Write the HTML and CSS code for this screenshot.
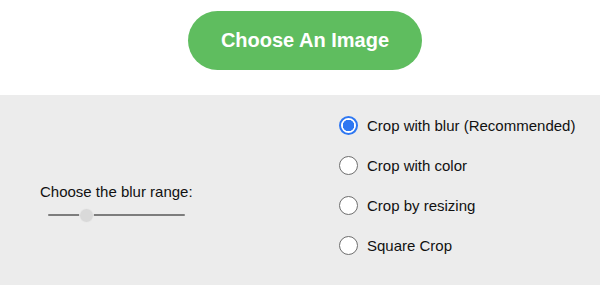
FILE: index.html
```html
<!DOCTYPE html>
<html>
<head>
<meta charset="utf-8">
<link rel="stylesheet" href="styles.css">
</head>
<body>
<header class="top">
  <button class="choose-btn">Choose An Image</button>
</header>
<section class="panel">
  <div class="blur-col">
    <label class="blur-label" for="blur">Choose the blur range:</label>
    <input class="blur-range" id="blur" type="range" min="0" max="100" value="25">
  </div>
  <div class="options">
    <label class="option"><input type="radio" name="mode" checked><span>Crop with blur (Recommended)</span></label>
    <label class="option"><input type="radio" name="mode"><span>Crop with color</span></label>
    <label class="option"><input type="radio" name="mode"><span>Crop by resizing</span></label>
    <label class="option"><input type="radio" name="mode"><span>Square Crop</span></label>
  </div>
</section>
</body>
</html>
```
FILE: styles.css
```css
* { box-sizing: border-box; }
html, body { margin: 0; padding: 0; background: #fff; }
body {
  font-family: "Liberation Sans", Arial, sans-serif;
  color: #111;
  width: 600px;
  height: 288px;
  overflow: hidden;
}
.top {
  height: 95px;
  display: flex;
  justify-content: center;
  padding-top: 11px;
  padding-left: 10px;
}
.choose-btn {
  width: 234px;
  height: 59px;
  border: none;
  border-radius: 30px;
  background: #5fbd5f;
  color: #fff;
  font-family: "Liberation Sans", Arial, sans-serif;
  font-weight: bold;
  font-size: 20px;
  padding: 0;
}
.panel {
  height: 190px;
  background: #ececec;
  display: flex;
}
.blur-col {
  width: 339px;
  padding-left: 40px;
  padding-top: 88px;
  display: flex;
  flex-direction: column;
}
.blur-label {
  font-size: 15px;
  line-height: 18px;
}
.blur-range {
  -webkit-appearance: none;
  appearance: none;
  width: 137px;
  height: 16px;
  margin: 6px 0 0 8px;
  background: transparent;
}
.blur-range::-webkit-slider-runnable-track {
  height: 2px;
  background: #7d7d7d;
  border-radius: 1px;
}
.blur-range::-webkit-slider-thumb {
  -webkit-appearance: none;
  width: 15px;
  height: 15px;
  margin-top: -6.5px;
  border-radius: 50%;
  background: #d9d9d9;
  border: 1.5px solid #ececec;
}
.options {
  display: flex;
  flex-direction: column;
  gap: 21px;
  padding-top: 21px;
}
.option {
  display: flex;
  align-items: center;
  gap: 9px;
  font-size: 15px;
  line-height: 18px;
}
.option input {
  -webkit-appearance: none;
  appearance: none;
  margin: 0;
  width: 19px;
  height: 19px;
  border-radius: 50%;
  border: 1.5px solid #6e6e6e;
  background: #fff;
}
.option input:checked {
  border: 2px solid #2e77f2;
  background: radial-gradient(circle, #2e77f2 0 5.5px, #fff 6px);
}
```
